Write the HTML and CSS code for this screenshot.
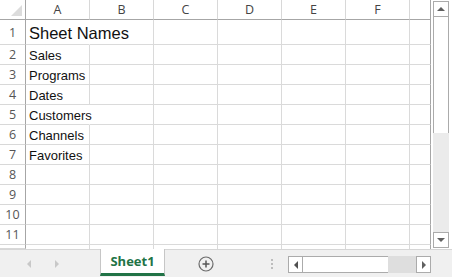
FILE: index.html
```html
<!DOCTYPE html>
<html lang="en">
<head>
    <meta charset="UTF-8">
    <title>Sheet1</title>
    <link rel="stylesheet" href="styles.css">
</head>
<body>
    <div class="workbook">
        <div class="main">
            <div class="sheet">
                <div class="row head">
                    <div class="corner"><span class="tri"></span></div>
                    <div class="col">A</div><div class="col">B</div><div class="col">C</div>
                    <div class="col">D</div><div class="col">E</div><div class="col">F</div>
                    <div class="col last"></div>
                </div>
                <div class="row tall">
                    <div class="num">1</div>
                    <div class="cell big spill">Sheet Names</div><div class="cell"></div><div class="cell"></div>
                    <div class="cell"></div><div class="cell"></div><div class="cell"></div><div class="cell last"></div>
                </div>
                <div class="row">
                    <div class="num">2</div>
                    <div class="cell">Sales</div><div class="cell"></div><div class="cell"></div>
                    <div class="cell"></div><div class="cell"></div><div class="cell"></div><div class="cell last"></div>
                </div>
                <div class="row">
                    <div class="num">3</div>
                    <div class="cell">Programs</div><div class="cell"></div><div class="cell"></div>
                    <div class="cell"></div><div class="cell"></div><div class="cell"></div><div class="cell last"></div>
                </div>
                <div class="row">
                    <div class="num">4</div>
                    <div class="cell">Dates</div><div class="cell"></div><div class="cell"></div>
                    <div class="cell"></div><div class="cell"></div><div class="cell"></div><div class="cell last"></div>
                </div>
                <div class="row">
                    <div class="num">5</div>
                    <div class="cell spill">Customers</div><div class="cell"></div><div class="cell"></div>
                    <div class="cell"></div><div class="cell"></div><div class="cell"></div><div class="cell last"></div>
                </div>
                <div class="row">
                    <div class="num">6</div>
                    <div class="cell">Channels</div><div class="cell"></div><div class="cell"></div>
                    <div class="cell"></div><div class="cell"></div><div class="cell"></div><div class="cell last"></div>
                </div>
                <div class="row">
                    <div class="num">7</div>
                    <div class="cell">Favorites</div><div class="cell"></div><div class="cell"></div>
                    <div class="cell"></div><div class="cell"></div><div class="cell"></div><div class="cell last"></div>
                </div>
                <div class="row">
                    <div class="num">8</div>
                    <div class="cell"></div><div class="cell"></div><div class="cell"></div>
                    <div class="cell"></div><div class="cell"></div><div class="cell"></div><div class="cell last"></div>
                </div>
                <div class="row">
                    <div class="num">9</div>
                    <div class="cell"></div><div class="cell"></div><div class="cell"></div>
                    <div class="cell"></div><div class="cell"></div><div class="cell"></div><div class="cell last"></div>
                </div>
                <div class="row">
                    <div class="num">10</div>
                    <div class="cell"></div><div class="cell"></div><div class="cell"></div>
                    <div class="cell"></div><div class="cell"></div><div class="cell"></div><div class="cell last"></div>
                </div>
                <div class="row">
                    <div class="num">11</div>
                    <div class="cell"></div><div class="cell"></div><div class="cell"></div>
                    <div class="cell"></div><div class="cell"></div><div class="cell"></div><div class="cell last"></div>
                </div>
                <div class="row stub">
                    <div class="num"></div>
                    <div class="cell"></div><div class="cell"></div><div class="cell"></div>
                    <div class="cell"></div><div class="cell"></div><div class="cell"></div><div class="cell last"></div>
                </div>
            </div>

            <div class="vscroll">
                <div class="btn"><span class="arrow up"></span></div>
                <div class="thumb"></div>
                <div class="track"></div>
                <div class="btn"><span class="arrow down"></span></div>
            </div>
        </div>

        <div class="tabbar">
            <div class="nav">
                <span class="arrow left light"></span>
                <span class="arrow right light"></span>
            </div>
            <div class="tab">Sheet1</div>
            <div class="add">
                <svg width="16" height="16" viewBox="0 0 16 16">
                    <circle cx="8" cy="8" r="7" fill="none" stroke="#6b6b6b" stroke-width="1.2"/>
                    <path d="M8 4.5v7M4.5 8h7" stroke="#555" stroke-width="1.5"/>
                </svg>
            </div>
            <div class="dots"><i></i><i></i><i></i></div>
            <div class="hscroll">
                <div class="btn"><span class="arrow left"></span></div>
                <div class="thumb"></div>
                <div class="track"></div>
                <div class="btn"><span class="arrow right"></span></div>
            </div>
        </div>
    </div>
</body>
</html>
```

FILE: styles.css
```css
* {
    box-sizing: border-box;
}

body {
    margin: 0;
    background: #fff;
    font-family: "Liberation Sans", Arial, sans-serif;
}

.workbook {
    width: 452px;
    height: 277px;
    display: flex;
    flex-direction: column;
    overflow: hidden;
}

.main {
    display: flex;
    height: 249px;
}

.sheet {
    width: 431px;
    overflow: hidden;
}

.row {
    display: flex;
    height: 20px;
}

.row.tall {
    height: 25px;
}

.row.head {
    height: 20px;
}

.row.stub {
    height: 4px;
}

.corner,
.num {
    width: 26px;
    flex: none;
    border-right: 1px solid #a6a6a6;
    border-bottom: 1px solid #d8d8d8;
}

.corner {
    position: relative;
    border-bottom-color: #a6a6a6;
}

.tri {
    position: absolute;
    right: 3px;
    bottom: 3px;
    width: 0;
    height: 0;
    border-left: 11px solid transparent;
    border-bottom: 11px solid #dcdcdc;
}

.num {
    font-family: "Open Sans", sans-serif;
    font-size: 12.5px;
    color: #555;
    text-align: center;
    line-height: 19px;
}

.row.tall .num {
    line-height: 26px;
}

.col {
    width: 64px;
    flex: none;
    border-right: 1px solid #d8d8d8;
    border-bottom: 1px solid #a6a6a6;
    font-family: "Open Sans", sans-serif;
    font-size: 12.5px;
    color: #444;
    text-align: center;
    line-height: 19px;
}

.cell {
    width: 64px;
    flex: none;
    border-right: 1px solid #dadada;
    border-bottom: 1px solid #dadada;
    font-size: 13px;
    color: #111;
    padding: 4px 0 0 3px;
    white-space: nowrap;
    line-height: 14px;
}

.cell.big {
    font-size: 16.5px;
    padding: 3px 0 0 3px;
    line-height: 20px;
}

.cell.spill {
    border-right-color: transparent;
}

.col.last,
.cell.last {
    width: 21px;
    border-right: 1px solid #a6a6a6;
}

/* scroll bars */

.vscroll {
    width: 21px;
    display: flex;
    flex-direction: column;
    padding: 1px 3px 1px 2px;
}

.vscroll .btn {
    height: 16px;
    flex: none;
}

.vscroll .thumb {
    height: 116px;
    background: #fff;
    border-left: 1px solid #ababab;
    border-right: 1px solid #ababab;
}

.vscroll .track {
    flex: 1;
    background: #ebebeb;
}

.btn {
    background: #fff;
    border: 1px solid #ababab;
    display: flex;
    align-items: center;
    justify-content: center;
}

.arrow {
    width: 0;
    height: 0;
}

.arrow.up {
    border-left: 4px solid transparent;
    border-right: 4px solid transparent;
    border-bottom: 4px solid #606060;
}

.arrow.down {
    border-left: 4px solid transparent;
    border-right: 4px solid transparent;
    border-top: 4px solid #606060;
}

.arrow.left {
    border-top: 4px solid transparent;
    border-bottom: 4px solid transparent;
    border-right: 4px solid #505050;
}

.arrow.right {
    border-top: 4px solid transparent;
    border-bottom: 4px solid transparent;
    border-left: 4px solid #606060;
}

.arrow.light {
    border-right-color: #c8c8c8;
    border-left-color: #c8c8c8;
}

/* sheet tabs */

.tabbar {
    flex: 1;
    display: flex;
    align-items: stretch;
    background: #f0f0f0;
    border-top: 1px solid #d6d6d6;
}

.nav {
    width: 100px;
    flex: none;
    display: flex;
    align-items: center;
    gap: 24px;
    padding-left: 27px;
}

.tab {
    width: 65px;
    flex: none;
    margin-top: -1px;
    background: #fff;
    border-left: 1px solid #c6c6c6;
    border-right: 1px solid #c6c6c6;
    border-bottom: 3px solid #217346;
    color: #217346;
    font-family: "Open Sans", sans-serif;
    font-weight: bold;
    font-size: 13px;
    text-align: center;
    line-height: 24px;
    margin-bottom: 2px;
}

.add {
    width: 82px;
    flex: none;
    display: flex;
    align-items: center;
    justify-content: center;
}

.dots {
    width: 41px;
    flex: none;
    display: flex;
    flex-direction: column;
    align-items: center;
    justify-content: center;
    gap: 2px;
    padding-left: 9px;
}

.dots i {
    width: 2px;
    height: 2px;
    background: #bdbdbd;
}

.hscroll {
    width: 143px;
    flex: none;
    display: flex;
    padding: 6px 0 5px;
}

.hscroll .btn {
    width: 15px;
    flex: none;
}

.hscroll .thumb {
    width: 85px;
    background: #fff;
    border-top: 1px solid #ababab;
    border-bottom: 1px solid #ababab;
}

.hscroll .track {
    flex: 1;
    background: #dedede;
}
```
